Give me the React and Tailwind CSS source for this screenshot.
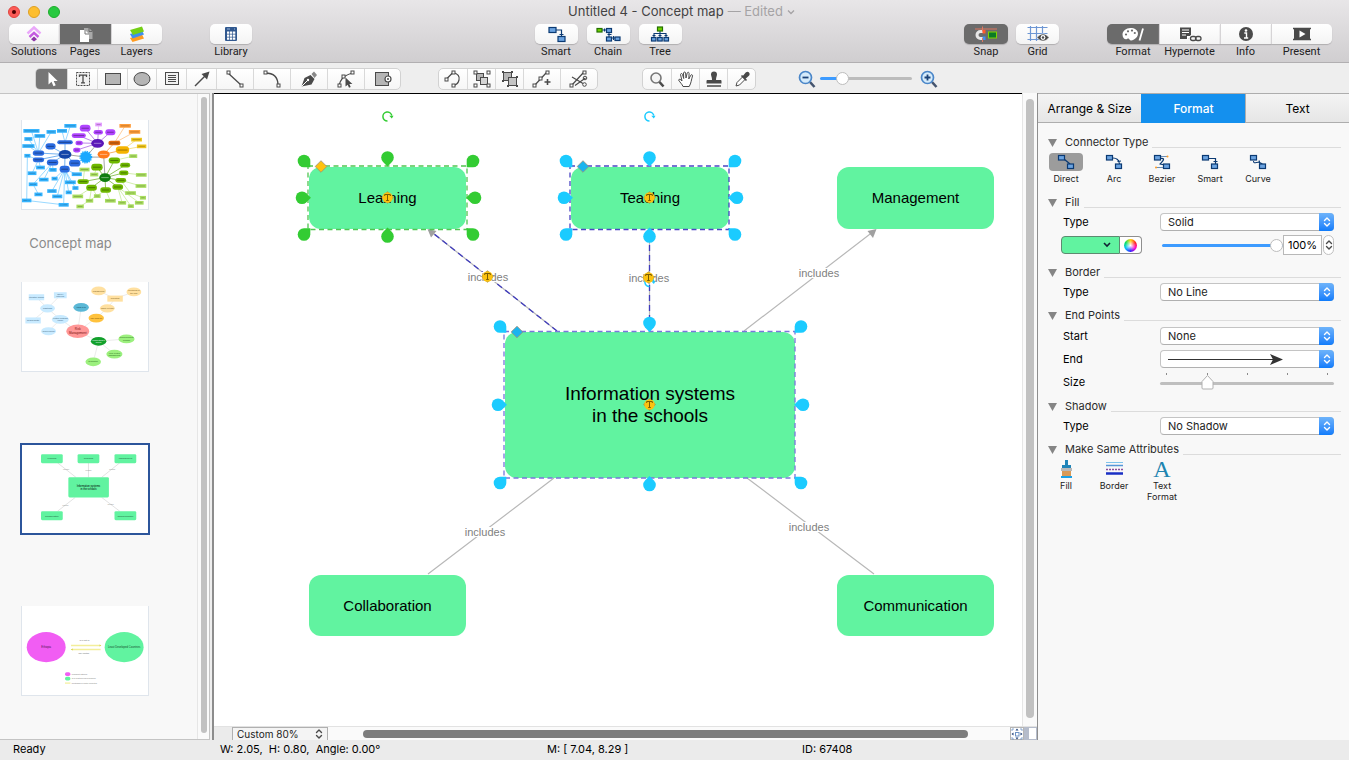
import { useState } from "react";
import { clsx } from "clsx";

const INK = "#4a4a4a";
const GREEN = "#61f3a0";
const NAVY = "#0b3a73";
const SKY = "#1bcbff";

/* ── Shared bits ── */

function Icon({ w = 24, h = 18, children, className }) {
  return (
    <svg width={w} height={h} viewBox={`0 0 ${w} ${h}`} fill="none" className={clsx("shrink-0", className)} aria-hidden="true">
      {children}
    </svg>
  );
}

function Dot({ x, y }) {
  return <rect x={x - 1.5} y={y - 1.5} width="3" height="3" fill="white" stroke={INK} strokeWidth="1" />;
}

function Box({ x, y, w = 7, h = 5, fill = "#6ba3e0", stroke = NAVY }) {
  return <rect x={x} y={y} width={w} height={h} fill={fill} stroke={stroke} strokeWidth="1.2" />;
}

function Chevrons({ color = INK, w = 8, h = 12 }) {
  return (
    <svg width={w} height={h} viewBox="0 0 8 12" fill="none" stroke={color} strokeWidth="1.4" strokeLinecap="round" strokeLinejoin="round" aria-hidden="true">
      <path d="M1.5 4.5L4 2l2.5 2.5M1.5 7.5L4 10l2.5-2.5" />
    </svg>
  );
}

/* ── Header icons ── */

const solutionsIcon = (
  <Icon>
    <g strokeWidth="2.4">
      <path d="M5.5 8.500L12 2.500l6.500 6" stroke="#eaa8fa" />
      <path d="M7.5 12L12 7.800l4.500 4.200" stroke="#c45be0" />
    </g>
    <path d="M12 11.500l3 2.700-3 2.300-3-2.300z" fill="#8d35a8" />
  </Icon>
);

const pagesIcon = (
  <Icon>
    <path d="M10 3h5l3.500 3.500V14H10z" fill="#a9a9a9" />
    <path d="M15 3v3.500h3.500" stroke="#6a6a6a" />
    <path d="M6 5h5l4 4v8H6z" fill="white" />
    <path d="M11 5v4h4" stroke="#777" />
  </Icon>
);

const layersIcon = (
  <Icon>
    <path d="M5 13l12-3.500 2 4L7.500 17z" fill="#ff9b21" />
    <path d="M5 9l12-3.500 2 4L7.500 13.500z" fill="#3f8ef0" />
    <path d="M5 5l12-3.500 2 5L8 10z" fill="#74cf16" />
  </Icon>
);

const libraryIcon = (
  <Icon>
    <rect x="6" y="2" width="12" height="14" rx="1" fill="#31588f" />
    <path d="M8 4h3M15 4h1" stroke="#9db8dc" />
    <path d="M8 6.500h2.300v2.300H8zM11 6.500h2.300v2.300H11zM14 6.500h2.300v2.300H14zM8 9.500h2.300v2.300H8zM11 9.500h2.300v2.300H11zM14 9.500h2.300v2.300H14zM8 12.500h2.300v2.300H8zM11 12.500h2.300v2.300H11zM14 12.500h2.300v2.300H14z" fill="white" />
  </Icon>
);

const smartIcon = (
  <Icon>
    <path d="M11 5h6.500v7M15.500 9.500h4" stroke={NAVY} strokeWidth="1.2" />
    <Box x="5" y="2.5" />
    <Box x="14" y="11.5" />
  </Icon>
);

const chainIcon = (
  <Icon w={26}>
    <path d="M6 5h8v8h9M9.500 3.500v3M12.500 9.500h4M18.500 11v4" stroke={NAVY} strokeWidth="1.1" />
    <Box x="2" y="3.5" w={5} h={3.5} fill="#6fd000" stroke="#247000" />
    <Box x="11.5" y="3.5" w={5} h={4} />
    <Box x="11.5" y="12" w={5} h={4} />
    <Box x="20" y="12" w={5} h={3.5} />
  </Icon>
);

const treeIcon = (
  <Icon>
    <path d="M12 4v9M6 12V8.500h12V12M4.500 10.500h3M10.500 10.500h3M16.500 10.500h3" stroke={NAVY} strokeWidth="1.1" />
    <Box x="9.5" y="2" w={5} h={4} fill="#6fd000" stroke="#247000" />
    <Box x="3.5" y="12.5" w={4.5} h={3.5} />
    <Box x="9.7" y="12.5" w={4.5} h={3.5} />
    <Box x="16" y="12.5" w={4.5} h={3.5} />
  </Icon>
);

const snapIcon = (
  <Icon>
    <path d="M1 4h22" stroke="#e0765f" />
    <path d="M9 6.500H6.500a3.500 3.500 0 000 7H9" stroke="#e6e6e6" strokeWidth="3" />
    <rect x="8.5" y="5" width="3" height="3.5" fill="#ff5a2c" />
    <rect x="8.5" y="11.5" width="3" height="3.5" fill="#3f8ef0" />
    <path d="M8.500 1.500v5M8.500 13v4" stroke="#e0765f" />
    <rect x="14.5" y="7" width="8" height="6" fill="#0b7a26" stroke="#7fd400" />
  </Icon>
);

const gridIcon = (
  <Icon>
    <path d="M1.500 2.500h20M1.500 8.500h20M1.500 14.500h12M4.500 1v15M10.500 1v15M16.500 1v8" stroke="#6e97d4" strokeWidth="1.2" />
    <path d="M11 12.500c3.500-4.700 8.500-4.700 12 0-3.500 4.700-8.500 4.700-12 0z" fill={INK} stroke="white" strokeWidth=".6" />
    <circle cx="17" cy="12.5" r="2.4" fill="white" />
    <circle cx="17" cy="12.5" r="1.2" fill={INK} />
  </Icon>
);

const paletteIcon = (
  <Icon>
    <path d="M9.500 3C5 3 1.500 6 1.500 9.500S4 15 6 14c1.200-.6 2-.6 2.500.5.600 1.300 2.300 1.200 4.500 0C15.500 13 17 11 17 8.500 17 5 13.500 3 9.500 3z" fill="white" />
    <circle cx="5" cy="9.5" r="1.1" fill="#6b6b6b" />
    <circle cx="7" cy="6.3" r="1.1" fill="#6b6b6b" />
    <circle cx="11" cy="5.6" r="1.1" fill="#6b6b6b" />
    <circle cx="13.8" cy="8" r="1.1" fill="#6b6b6b" />
    <path d="M22 3.500l-3.500 12" stroke="white" strokeWidth="1.8" />
  </Icon>
);

const hypernoteIcon = (
  <Icon>
    <path d="M2 2.500h11v7L10 14H2z" fill={INK} />
    <path d="M4 5h7M4 7.500h7M4 10h4" stroke="white" />
    <path d="M9 15v-4h4z" fill="white" />
    <rect x="12.5" y="11.5" width="5.5" height="4" rx="2" stroke={INK} strokeWidth="1.3" />
    <rect x="17.5" y="11.5" width="5.5" height="4" rx="2" stroke={INK} strokeWidth="1.3" />
  </Icon>
);

const infoIcon = (
  <Icon>
    <circle cx="12" cy="9" r="7" fill={INK} />
    <circle cx="12" cy="5.5" r="1.3" fill="white" />
    <path d="M10.300 8h2.200v5M10 13h4.200" stroke="white" strokeWidth="1.4" />
  </Icon>
);

const presentIcon = (
  <Icon>
    <path d="M3 3.500h18M3 14.500h18" stroke={INK} strokeWidth="1.4" />
    <rect x="4" y="3.5" width="16" height="11" fill={INK} />
    <path d="M9.500 5.500l6 3.500-6 3.500z" fill="white" />
  </Icon>
);

function HeaderGroup({ items }) {
  return (
    <div className="flex">
      {items.map((item, i) => (
        <button key={item.label} type="button" className={clsx("flex flex-col items-center", item.width)}>
          <span
            className={clsx(
              "flex h-5 w-full items-center justify-center border-[#d6d4d6] shadow-[0_1px_1px_#b0aeb0]",
              i === 0 ? "rounded-l-[5px]" : "border-l",
              i === items.length - 1 && "rounded-r-[5px]",
              item.active ? "bg-[#6b6b6b]" : "bg-gradient-to-b from-white to-[#f4f4f4]"
            )}
          >
            {item.icon}
          </span>
          <span className="font-[Roboto,sans-serif] text-[11px] leading-[15px] whitespace-nowrap text-[#222122]">{item.label}</span>
        </button>
      ))}
    </div>
  );
}

function Header() {
  return (
    <header className="border-b border-[#b1afb1] bg-gradient-to-b from-[#e8e6e8] to-[#d0ced0]">
      <div className="grid h-6 grid-cols-[1fr_auto_1fr] items-center pr-2 pl-2">
        <div className="flex gap-2">
          <button type="button" aria-label="Close" className="flex h-3 w-3 items-center justify-center rounded-full border border-[#e0443e] bg-[#fc5b57]">
            <span className="h-1 w-1 rounded-full bg-[#4d0000]" />
          </button>
          <button type="button" aria-label="Minimize" className="h-3 w-3 rounded-full border border-[#dfa023] bg-[#fdbe30]" />
          <button type="button" aria-label="Zoom window" className="h-3 w-3 rounded-full border border-[#1dad2b] bg-[#27c93f]" />
        </div>
        <h1 className="flex items-center justify-center gap-1 pl-[14px] text-[13px] whitespace-nowrap text-[#434243]">
          Untitled 4 - Concept map <span className="text-[#a5a3a5]">— Edited</span>
          <Icon w={8} h={6}>
            <path d="M1 1.500l3 3 3-3" stroke="#a5a3a5" strokeWidth="1.3" />
          </Icon>
        </h1>
        <span />
      </div>
      <div className="flex justify-between pr-[17px] pb-[3px] pl-[9px]">
        <div className="flex gap-12">
          <HeaderGroup
            items={[
              { label: "Solutions", icon: solutionsIcon, width: "w-[50px]" },
              { label: "Pages", icon: pagesIcon, width: "w-[52px]", active: true },
              { label: "Layers", icon: layersIcon, width: "w-[51px]" },
            ]}
          />
          <HeaderGroup items={[{ label: "Library", icon: libraryIcon, width: "w-[42px]" }]} />
        </div>
        <div className="flex gap-[9px]">
          <HeaderGroup items={[{ label: "Smart", icon: smartIcon, width: "w-[43px]" }]} />
          <HeaderGroup items={[{ label: "Chain", icon: chainIcon, width: "w-[43px]" }]} />
          <HeaderGroup items={[{ label: "Tree", icon: treeIcon, width: "w-[43px]" }]} />
        </div>
        <div className="flex gap-12">
          <div className="flex gap-2">
            <HeaderGroup items={[{ label: "Snap", icon: snapIcon, width: "w-11", active: true }]} />
            <HeaderGroup items={[{ label: "Grid", icon: gridIcon, width: "w-[43px]" }]} />
          </div>
          <HeaderGroup
            items={[
              { label: "Format", icon: paletteIcon, width: "w-[52px]", active: true },
              { label: "Hypernote", icon: hypernoteIcon, width: "w-[61px]" },
              { label: "Info", icon: infoIcon, width: "w-[51px]" },
              { label: "Present", icon: presentIcon, width: "w-[61px]" },
            ]}
          />
        </div>
      </div>
    </header>
  );
}

/* ── Drawing toolbar ── */

const drawTools = [
  {
    label: "Select",
    width: "w-[31px]",
    icon: <path d="M8.500 2v12.500l3-2.700 2 4.500 2.200-1-2-4.400h4z" fill="white" />,
  },
  {
    label: "Text block",
    width: "w-[30px]",
    icon: (
      <>
        <rect x="5.5" y="2.5" width="13" height="13" stroke={INK} strokeDasharray="2 1" fill="#f1f1f1" />
        <path d="M8.500 7V5.200h7V7M12 5.200v7.500M10 12.900h4" stroke={INK} strokeWidth="1.3" />
      </>
    ),
  },
  {
    label: "Rectangle",
    width: "w-[30px]",
    icon: <rect x="4.5" y="3.5" width="15" height="11" fill="#b5b5b5" stroke={INK} />,
  },
  {
    label: "Ellipse",
    width: "w-[29px]",
    icon: <ellipse cx="12" cy="9" rx="8" ry="6.5" fill="#b5b5b5" stroke={INK} />,
  },
  {
    label: "Note",
    width: "w-[30px]",
    icon: (
      <>
        <rect x="5.5" y="2.5" width="13" height="12" fill="#f1f1f1" stroke={INK} />
        <path d="M8 5.500h8M8 7.500h8M8 9.500h8M8 11.500h8" stroke={INK} />
      </>
    ),
  },
  {
    label: "Arrow",
    width: "w-[30px]",
    icon: (
      <>
        <path d="M5 16L15 6" stroke={INK} strokeWidth="1.4" />
        <path d="M19.500 1.500L17 9.500l-5.500-5.500z" fill={INK} />
      </>
    ),
  },
  {
    label: "Line",
    width: "w-[37px]",
    icon: (
      <>
        <path d="M5 3l13 12" stroke={INK} strokeWidth="1.3" />
        <Dot x={5.5} y={2.5} />
        <Dot x={18.5} y={15.5} />
      </>
    ),
  },
  {
    label: "Arc",
    width: "w-[37px]",
    icon: (
      <>
        <path d="M5 3c9 0 13 4 13 12" stroke={INK} strokeWidth="1.3" />
        <Dot x={5.5} y={2.5} />
        <Dot x={18.5} y={15.5} />
      </>
    ),
  },
  {
    label: "Pen",
    width: "w-[37px]",
    icon: (
      <>
        <path d="M4.500 16.500l3-8.500 6-3 4 4-3 5.500z" fill={INK} />
        <path d="M4.500 16.500l5.500-5.500" stroke="white" />
        <circle cx="11" cy="10" r="1.2" fill="white" />
        <path d="M14.500 4l2.500-2.500L20 5l-2.500 3z" fill="#888" />
      </>
    ),
  },
  {
    label: "Edit points",
    width: "w-[37px]",
    icon: (
      <>
        <path d="M5 15.500C6.500 10 8 6 18.500 3" stroke={INK} strokeWidth="1.3" />
        <Dot x={5.5} y={15.5} />
        <Dot x={9.5} y={6.5} />
        <Dot x={18.5} y={2.5} />
        <path d="M11.500 7.500v9l2.200-1.800 1.300 3 1.700-.7-1.300-3h3z" fill={INK} />
      </>
    ),
  },
  {
    label: "Connection point",
    width: "w-[36px]",
    icon: (
      <>
        <rect x="4.5" y="2.5" width="13" height="13" fill="#b5b5b5" stroke={INK} />
        <circle cx="17" cy="9" r="3" fill="white" stroke={INK} strokeWidth="1.2" />
        <circle cx="17" cy="9" r="1" fill={INK} />
      </>
    ),
  },
];

const editTools = [
  {
    label: "Round",
    width: "w-7",
    icon: (
      <>
        <path d="M5 9.500l7-7c5 1 7 4 6 7.500-.7 3-3 5-6 5.500" stroke={INK} strokeWidth="1.2" />
        <Dot x={5.5} y={9.5} />
        <Dot x={12.5} y={2.5} />
        <Dot x={12.5} y={15.5} />
      </>
    ),
  },
  {
    label: "Group",
    width: "w-7",
    icon: (
      <>
        <rect x="6.5" y="3.5" width="7" height="7" fill="#b5b5b5" stroke={INK} />
        <rect x="10.5" y="7.5" width="7" height="7" fill="#d4d4d4" stroke={INK} />
        <Dot x={5.5} y={2.5} />
        <Dot x={18.5} y={2.5} />
        <Dot x={5.5} y={15.5} />
        <Dot x={18.5} y={15.5} />
      </>
    ),
  },
  {
    label: "Ungroup",
    width: "w-7",
    icon: (
      <>
        <rect x="5.5" y="2.5" width="8" height="8" fill="#b5b5b5" stroke={INK} />
        <rect x="10.5" y="7.5" width="8" height="8" fill="#c4c4c4" stroke={INK} />
        <path d="M4 1h2v2H4zM13 1h2v2h-2zM4 10h2v2H4zM9 15h2v2H9zM18 15h2v2h-2zM18 6h2v2h-2z" fill={INK} />
      </>
    ),
  },
  {
    label: "Add point",
    width: "w-[37px]",
    icon: (
      <>
        <path d="M4.500 15.500l12-13" stroke={INK} strokeWidth="1.2" />
        <Dot x={4.5} y={15.5} />
        <Dot x={10.5} y={8.5} />
        <Dot x={17.5} y={2.5} />
        <path d="M17.500 9v6M14.500 12h6" stroke={INK} strokeWidth="1.6" />
      </>
    ),
  },
  {
    label: "Cut connector",
    width: "w-[37px]",
    icon: (
      <>
        <path d="M4.500 15.500l12-13M5 7l11 6.500M8 15.500L18.500 8" stroke={INK} strokeWidth="1.2" />
        <Dot x={4.5} y={15.5} />
        <Dot x={17.5} y={2.5} />
        <circle cx="18" cy="8" r="1.8" stroke={INK} />
        <circle cx="17.5" cy="14.5" r="1.8" stroke={INK} />
      </>
    ),
  },
];

const viewTools = [
  {
    label: "Magnifier",
    width: "w-7",
    icon: (
      <>
        <circle cx="11" cy="8" r="5" fill="#f4f4f4" stroke="#777" strokeWidth="1.6" />
        <path d="M14.500 12l4 4.500" stroke={INK} strokeWidth="2.6" />
      </>
    ),
  },
  {
    label: "Hand",
    width: "w-7",
    icon: (
      <path
        d="M9 16.500c-1-2.500-2.500-3.500-4.500-6.500.5-1.200 2-1 3.500 1L6.500 4.500c.3-1.300 1.700-1.200 2 0L9.700 8.500 9.500 3c.3-1.300 1.900-1.300 2.100 0L12 8l1.200-5c.5-1.200 2-.9 1.900.5L14.800 9l2-3.800c.8-1 2-.4 1.700.8-1.200 4-1.300 7-3.300 10.500z"
        fill="white"
        stroke={INK}
        strokeWidth="1"
      />
    ),
  },
  {
    label: "Stamp",
    width: "w-7",
    icon: (
      <>
        <path d="M12 1.500a3 3 0 013 3c0 1.500-1 2.500-1 5.500h4.500c.6 0 1 .5 1 1v2.500h-15V11c0-.5.400-1 1-1H10c0-3-1-4-1-5.500a3 3 0 013-3z" fill={INK} />
        <path d="M5 16h14" stroke={INK} strokeWidth="1.5" />
      </>
    ),
  },
  {
    label: "Eyedropper",
    width: "w-7",
    icon: (
      <>
        <path d="M6 16l1-3.500 6-6 2.500 2.500-6 6z" fill="white" stroke={INK} />
        <path d="M11.500 5.500l5 5M13 7l3.500-4c1.500-1 3 .5 2 2l-4 3.500z" stroke={INK} strokeWidth="1.7" fill={INK} />
      </>
    ),
  },
];

function ToolStrip({ tools, active }) {
  return (
    <div className="flex h-[22px] overflow-hidden rounded-[5px] border border-[#d2d2d2] bg-gradient-to-b from-white to-[#f6f6f6]">
      {tools.map((tool, i) => (
        <button
          key={tool.label}
          type="button"
          aria-label={tool.label}
          className={clsx(
            "flex items-center justify-center border-[#d9d9d9]",
            tool.width,
            i > 0 && "border-l",
            tool.label === active && "bg-[#767676]"
          )}
        >
          <Icon>{tool.icon}</Icon>
        </button>
      ))}
    </div>
  );
}

function ZoomGlass({ plus }) {
  return (
    <Icon w={18}>
      <path d="M12 12l4.500 5" stroke="#44546e" strokeWidth="2.6" />
      <circle cx="7.5" cy="7.5" r="6" fill="#d5ebfb" stroke="#4a86c8" strokeWidth="1.7" />
      <path d={plus ? "M4.500 7.500h6M7.500 4.500v6" : "M4.500 7.500h6"} stroke="#1c4378" strokeWidth="1.8" />
    </Icon>
  );
}

const ROUND_THUMB =
  "appearance-none bg-transparent [&::-webkit-slider-runnable-track]:h-[3px] [&::-webkit-slider-runnable-track]:rounded-full [&::-webkit-slider-thumb]:-mt-[5px] [&::-webkit-slider-thumb]:h-[13px] [&::-webkit-slider-thumb]:w-[13px] [&::-webkit-slider-thumb]:appearance-none [&::-webkit-slider-thumb]:rounded-full [&::-webkit-slider-thumb]:border [&::-webkit-slider-thumb]:border-[#bdbdbd] [&::-webkit-slider-thumb]:bg-white";

function Toolbar() {
  return (
    <div className="flex h-[30px] items-center bg-[#eeeeee] pt-px pl-[35px]">
      <ToolStrip tools={drawTools} active="Select" />
      <div className="w-[37px]" />
      <ToolStrip tools={editTools} />
      <div className="w-11" />
      <ToolStrip tools={viewTools} />
      <div className="flex items-center gap-1 pl-[42px]">
        <button type="button" aria-label="Zoom out">
          <ZoomGlass />
        </button>
        <input
          type="range"
          aria-label="Zoom"
          defaultValue="20"
          className={clsx(
            "mr-1 h-[13px] w-[92px] [&::-webkit-slider-runnable-track]:bg-[linear-gradient(90deg,#3d9bff_20%,#bcbcbc_20%)]",
            ROUND_THUMB
          )}
        />
        <button type="button" aria-label="Zoom in">
          <ZoomGlass plus />
        </button>
      </div>
    </div>
  );
}

/* ── Page thumbnails ── */

const hub = (x, y, rx, ry, fill) => ({ x, y, rx, ry, fill });

const mindBranches = [
  {
    line: "#2f8ce8",
    center: hub(196, 177, 19, 13, "#1546a8"),
    nodes: [
      hub(196, 141, 23, 6, "#2b6be0"), hub(153, 153, 15, 9, "#2b6be0"), hub(117, 173, 17, 8, "#2b6be0"),
      hub(117, 193, 17, 7, "#2b6be0"), hub(159, 201, 17, 9, "#2b6be0"), hub(195, 221, 15, 10, "#2b6be0"),
      hub(225, 203, 17, 10, "#2b6be0"),
    ],
  },
  {
    line: "#9b4be0",
    center: hub(293, 144, 19, 13, "#5a16b8"),
    nodes: [
      hub(256, 99, 16, 10, "#b044ff"), hub(295, 111, 14, 7, "#b044ff"), hub(331, 111, 15, 9, "#b044ff"),
      hub(237, 121, 21, 7, "#b044ff"), hub(238, 143, 11, 7, "#b044ff"), hub(231, 164, 11, 7, "#b044ff"),
    ],
  },
  {
    line: "#ee8a20",
    center: hub(311, 177, 18, 12, "#ff7a1c"),
    nodes: [hub(343, 143, 18, 7, "#e06a10"), hub(367, 164, 20, 11, "#f5b400")],
  },
  {
    line: "#5ea80e",
    center: hub(315, 246, 17, 13, "#0f7d0f"),
    nodes: [
      hub(291, 215, 17, 10, "#6fb800"), hub(250, 258, 17, 7, "#6fb800"), hub(275, 276, 16, 9, "#6fb800"),
      hub(317, 283, 16, 8, "#6fb800"), hub(353, 274, 16, 8, "#6fb800"), hub(362, 254, 16, 7, "#6fb800"),
      hub(371, 232, 14, 7, "#6fb800"), hub(375, 209, 15, 7, "#6fb800"), hub(343, 195, 17, 9, "#6fb800"),
    ],
  },
];

// [x, y, width, parentX, parentY]
const mindLeaves = [
  {
    fill: "#35b4ff",
    items: [
      [96, 107, 48, 117, 173], [155, 110, 28, 117, 173], [187, 107, 30, 196, 141], [212, 92, 36, 196, 141],
      [87, 131, 24, 117, 173], [121, 122, 32, 117, 173], [87, 152, 36, 117, 173], [84, 181, 18, 117, 193],
      [123, 216, 26, 117, 193], [98, 233, 26, 117, 193], [133, 252, 28, 159, 201], [160, 223, 22, 159, 201],
      [101, 266, 26, 159, 201], [165, 249, 18, 195, 221], [117, 296, 24, 101, 266], [157, 286, 28, 195, 221],
      [173, 302, 30, 195, 221], [192, 327, 30, 195, 221], [207, 290, 18, 195, 221], [212, 260, 32, 195, 221],
      [231, 236, 30, 195, 221], [227, 277, 18, 195, 221], [82, 314, 28, 84, 181],
    ],
  },
  { fill: "#e39bff", items: [[296, 88, 20, 295, 111]] },
  { fill: "#ff9d3a", items: [[375, 92, 34, 343, 143], [403, 110, 34, 343, 143]] },
  { fill: "#edc41d", items: [[409, 133, 32, 367, 164], [424, 153, 28, 367, 164]] },
  {
    fill: "#a8dd5e",
    items: [
      [254, 222, 30, 250, 258], [283, 237, 24, 291, 215], [234, 302, 32, 275, 276], [241, 332, 22, 317, 283],
      [269, 315, 22, 275, 276], [292, 301, 20, 275, 276], [331, 315, 32, 317, 283], [366, 321, 24, 353, 274],
      [392, 331, 18, 353, 274], [391, 292, 32, 362, 254], [428, 306, 18, 391, 292], [417, 321, 26, 353, 274],
      [422, 271, 32, 362, 254], [423, 238, 32, 371, 232], [399, 182, 24, 343, 195],
    ],
  },
];

function MindMapThumb() {
  return (
    <svg viewBox="65 75 381 267" className="h-full w-full" aria-hidden="true">
      {mindLeaves.map((group) =>
        group.items.map(([x, y, w, px, py]) => (
          <g key={`${x}-${y}`}>
            <path d={`M${x} ${y}L${px} ${py}`} stroke={group.fill} strokeWidth="1.5" />
            <rect x={x - w / 2} y={y - 5.5} width={w} height="11" fill={group.fill} />
            <path d={`M${x - w / 2 + 4} ${y}h${w - 8}`} stroke="#000" strokeOpacity=".25" strokeWidth="2.5" />
          </g>
        ))
      )}
      <path d="M82 314L192 327" stroke="#35b4ff" strokeWidth="1.5" />
      <path d="M258 185L196 177M258 185L293 144M258 185H311M311 177L315 246" stroke="#777" strokeWidth="2" />
      {mindBranches.map((b) => (
        <g key={b.line}>
          {b.nodes.map((n) => (
            <g key={`${n.x}-${n.y}`}>
              <path d={`M${b.center.x} ${b.center.y}L${n.x} ${n.y}`} stroke={b.line} strokeWidth="2" />
              <rect x={n.x - n.rx} y={n.y - n.ry} width={n.rx * 2} height={n.ry * 2} rx={n.ry} fill={n.fill} />
              <path d={`M${n.x - n.rx + 5} ${n.y}h${n.rx * 2 - 10}`} stroke="#000" strokeOpacity=".35" strokeWidth="3" />
            </g>
          ))}
          <ellipse cx={b.center.x} cy={b.center.y} rx={b.center.rx} ry={b.center.ry} fill={b.center.fill} />
          <path d={`M${b.center.x - 11} ${b.center.y}h22`} stroke="#fff" strokeOpacity=".4" strokeWidth="3" />
        </g>
      ))}
      <circle cx="258" cy="185" r="16" fill="#1aa8ff" />
      <circle cx="258" cy="185" r="17" stroke="#1aa8ff" strokeWidth="4" strokeDasharray="4 2.700" fill="none" />
    </svg>
  );
}

const riskLinks = [
  [234, 707, 244, 636], [234, 707, 289, 668], [234, 707, 182, 672], [234, 707, 296, 737], [289, 668, 322, 639],
  [322, 639, 345, 610], [345, 610, 296, 587], [345, 610, 401, 590], [182, 672, 144, 639], [182, 672, 147, 707],
  [144, 639, 111, 606], [144, 639, 182, 600], [144, 639, 101, 675], [296, 737, 379, 730], [296, 737, 343, 775],
  [296, 737, 280, 798],
];

const riskNodes = [
  { x: 234, y: 707, rx: 34, ry: 20, fill: "#ff9797", lines: ["Risk", "Management"], color: "#7a1010", size: 9 },
  { x: 244, y: 636, rx: 23, ry: 13, fill: "#5bb8d6", lines: ["What is it?"], color: "#0c4156" },
  { x: 289, y: 668, rx: 23, ry: 13, fill: "#ffc23d", lines: ["Why does it?"], color: "#6b4700" },
  { x: 182, y: 672, rx: 25, ry: 13, fill: "#c8eaff", lines: ["Further methods", "used?"], color: "#3b617a" },
  { x: 147, y: 707, rx: 22, ry: 12, fill: "#c8eaff", lines: ["Group project"], color: "#3b617a" },
  { x: 144, y: 639, rx: 22, ry: 12, fill: "#c8eaff", lines: ["Traditional"], color: "#3b617a" },
  { x: 322, y: 639, rx: 22, ry: 12, fill: "#ffe0a0", lines: ["Safety of team"], color: "#7a5a1a" },
  { x: 296, y: 587, rx: 22, ry: 13, fill: "#ffe0a0", lines: ["Management"], color: "#7a5a1a" },
  { x: 401, y: 590, rx: 22, ry: 13, fill: "#ffe0a0", lines: ["Monitoring of", "the plan"], color: "#7a5a1a" },
  { x: 296, y: 737, rx: 23, ry: 13, fill: "#12a02c", lines: ["Which steps it", "does?"], color: "#ffffff" },
  { x: 379, y: 730, rx: 24, ry: 13, fill: "#9cf07e", lines: ["Communicating", "findings"], color: "#2b6b1a" },
  { x: 343, y: 775, rx: 24, ry: 13, fill: "#9cf07e", lines: ["Work related", "assessments"], color: "#2b6b1a" },
  { x: 280, y: 798, rx: 23, ry: 13, fill: "#9cf07e", lines: ["Evaluation"], color: "#2b6b1a" },
  { x: 345, y: 610, rx: 23, ry: 9, fill: "#ffe0a0", lines: ["Reporting"], color: "#7a5a1a", box: true },
  { x: 111, y: 606, rx: 23, ry: 9, fill: "#c8eaff", lines: ["Literature search"], color: "#3b617a", box: true },
  { x: 182, y: 600, rx: 19, ry: 9, fill: "#c8eaff", lines: ["Survey", "interview"], color: "#3b617a", box: true },
  { x: 101, y: 675, rx: 23, ry: 9, fill: "#c8eaff", lines: ["Search what?"], color: "#3b617a", box: true },
];

function RiskThumb() {
  return (
    <svg viewBox="65 561 381 267" className="h-full w-full font-[Liberation_Sans,sans-serif]" aria-hidden="true">
      {riskLinks.map((l) => (
        <path key={l.join()} d={`M${l[0]} ${l[1]}L${l[2]} ${l[3]}`} stroke="#d8d8d8" strokeWidth="1.5" />
      ))}
      {riskNodes.map((n) => (
        <g key={`${n.x}-${n.y}`}>
          {n.box ? (
            <rect x={n.x - n.rx} y={n.y - n.ry} width={n.rx * 2} height={n.ry * 2} fill={n.fill} />
          ) : (
            <ellipse cx={n.x} cy={n.y} rx={n.rx} ry={n.ry} fill={n.fill} />
          )}
          {n.lines.map((t, i) => (
            <text key={t} x={n.x} y={n.y + 2 + (i - (n.lines.length - 1) / 2) * (n.size || 6) * 1.1} fontSize={n.size || 6} textAnchor="middle" fill={n.color}>
              {t}
            </text>
          ))}
        </g>
      ))}
    </svg>
  );
}

function SchoolsThumb() {
  const boxes = [
    [155, 86, "Learning"], [266, 86, "Teaching"], [378, 86, "Management"], [155, 259, "Collaboration"], [378, 259, "Communication"],
  ];
  return (
    <svg viewBox="65 45 381 267" className="h-full w-full font-[Liberation_Sans,sans-serif]" aria-hidden="true">
      <path d="M172 99L228 143M266 99v44M361 99L306 143M172 246L226 204M361 246L306 204" stroke="#c4c4c4" strokeWidth="1.5" />
      {boxes.map(([x, y, t]) => (
        <g key={t}>
          <rect x={x - 33} y={y - 13} width="66" height="27" rx="4" fill={GREEN} />
          <text x={x} y={y + 3} fontSize="7" textAnchor="middle" fill="#1d5a38">{t}</text>
        </g>
      ))}
      <rect x="205" y="143" width="123" height="61" rx="4" fill={GREEN} />
      <text x="266" y="172" fontSize="8" textAnchor="middle">Information systems</text>
      <text x="266" y="181" fontSize="8" textAnchor="middle">in the schools</text>
      {[[198, 122], [266, 123], [338, 121], [196, 230], [333, 228]].map(([x, y]) => (
        <text key={x} x={x} y={y} fontSize="5" textAnchor="middle" fill="#888">includes</text>
      ))}
    </svg>
  );
}

function CountriesThumb() {
  return (
    <svg viewBox="65 528 381 267" className="h-full w-full font-[Liberation_Sans,sans-serif]" aria-hidden="true">
      <ellipse cx="140" cy="650" rx="58" ry="45" fill="#f15df3" />
      <ellipse cx="372" cy="650" rx="58" ry="45" fill={GREEN} />
      <text x="140" y="652" fontSize="8" textAnchor="middle" fill="#4a1550">Ethiopia</text>
      <text x="372" y="653" fontSize="8" textAnchor="middle" fill="#174a2c">Least Developed Countries</text>
      <path d="M214 645h86M218 657h84" stroke="#f3ee9a" strokeWidth="4" />
      <path d="M299 642l5 3-5 3zM219 654l-6 3 6 3z" fill="#d6cf3a" />
      <text x="254" y="633" fontSize="6" textAnchor="middle" fill="#666">is in part of</text>
      <text x="252" y="671" fontSize="6" textAnchor="middle" fill="#666">may contain</text>
      <rect x="196" y="725" width="16" height="11" rx="5" fill="#f15df3" />
      <rect x="196" y="738" width="16" height="11" rx="5" fill={GREEN} />
      <path d="M196 757h16" stroke="#f0e76e" strokeWidth="2.5" />
      <g fontSize="5" fill="#777">
        <text x="216" y="732">belonging to Ethiopia</text>
        <text x="216" y="745">all of Least Developed Countries</text>
        <text x="216" y="759">Relationship of country connection</text>
      </g>
    </svg>
  );
}

const pages = [
  { name: "Page 1", caption: "Concept map", thumb: <MindMapThumb /> },
  { name: "Page 2", thumb: <RiskThumb /> },
  { name: "Page 3", thumb: <SchoolsThumb /> },
  { name: "Page 4", thumb: <CountriesThumb /> },
];

function PagesSidebar() {
  const [selected, setSelected] = useState(2);

  return (
    <aside className="flex w-[210px] shrink-0 border-t border-r border-b border-[#c4c4c4] bg-[#f8f8f8]">
      <div className="flex-1 overflow-hidden pt-[25px] pl-5">
        {pages.map((page, i) => (
          <div key={page.name} className="h-[162px]">
            <button
              type="button"
              aria-label={page.name}
              onClick={() => setSelected(i)}
              className={clsx(
                "block h-[92px] w-[130px] bg-white",
                selected === i ? "border-2 border-[#2c559b]" : "border border-[#f8f8f8] shadow-[inset_-1px_-1px_0_#dfe5ec,inset_1px_0_0_#dfe5ec]"
              )}
            >
              {page.thumb}
            </button>
            {page.caption && (
              <p className="w-[101px] pt-[22px] text-center text-[13px] leading-5 text-[#8a8a8a]">{page.caption}</p>
            )}
          </div>
        ))}
      </div>
      <div className="flex w-3 justify-center border-l border-[#e6e6e6] bg-[#fafafa] pt-[3px] pb-[6px]">
        <div className="w-[6px] rounded-full bg-[#c1c1c1]" />
      </div>
    </aside>
  );
}

/* ── Canvas ── */

const nodes = [
  { label: "Learning", place: "left-[95px] top-[73px] h-[62px] w-[157px]" },
  { label: "Teaching", place: "left-[357px] top-[73px] h-[62px] w-[158px]" },
  { label: "Management", place: "left-[623px] top-[73px] h-[62px] w-[157px]" },
  { label: "Information systems\nin the schools", place: "left-[291px] top-[238px] h-[146px] w-[290px]", large: true },
  { label: "Collaboration", place: "left-[95px] top-[481px] h-[61px] w-[157px]" },
  { label: "Communication", place: "left-[623px] top-[481px] h-[61px] w-[157px]" },
];

const edgeLabels = [
  { id: "learning", x: 274, y: 187 },
  { id: "teaching", x: 435, y: 188 },
  { id: "management", x: 605, y: 183 },
  { id: "collaboration", x: 271, y: 442 },
  { id: "communication", x: 595, y: 437 },
];

function Handle({ x, y, turn, color }) {
  return <path d="M6.300 0A6.300 6.300 0 1 0 0 6.300H6.300Z" fill={color} transform={`translate(${x} ${y}) rotate(${turn})`} />;
}

function Selection({ x1, y1, x2, y2, color, dash, knob }) {
  const cx = (x1 + x2) / 2;
  const cy = (y1 + y2) / 2;
  return (
    <g>
      <rect x={x1} y={y1} width={x2 - x1} height={y2 - y1} stroke={dash} strokeWidth="1.3" strokeDasharray="5 3.500" fill="none" />
      <Handle x={x1 - 4} y={y1 - 5} turn={0} color={color} />
      <Handle x={cx} y={y1 - 8.5} turn={45} color={color} />
      <Handle x={x2 + 6} y={y1 - 5} turn={90} color={color} />
      <Handle x={x2 + 8} y={cy} turn={135} color={color} />
      <Handle x={x2 + 6} y={y2 + 5} turn={180} color={color} />
      <Handle x={cx} y={y2 + 7} turn={225} color={color} />
      <Handle x={x1 - 4} y={y2 + 5} turn={270} color={color} />
      <Handle x={x1 - 6} y={cy} turn={315} color={color} />
      <path d="M0-5.800L5.800 0 0 5.800-5.800 0z" transform={`translate(${x1 + 13} ${y1 + 0.5})`} fill={knob} stroke="#9a8f78" strokeWidth=".8" />
    </g>
  );
}

function TextBadge({ x, y }) {
  return (
    <g transform={`translate(${x} ${y})`}>
      <path d="M0-6.300L6.300 0 0 6.300-6.300 0z" fill="#a08c50" />
      <circle r="5.2" fill="#fcc210" />
      <path d="M-2.800-1.500v-1.500h5.600v1.500M0-3v6M-1.300 3h2.600" stroke="#7a5c00" strokeWidth="1" fill="none" />
    </g>
  );
}

function RotateMark({ x, y, color }) {
  return (
    <g transform={`translate(${x} ${y})`}>
      <path d="M0 4.500A4.500 4.500 0 1 1 4.300-1" stroke={color} strokeWidth="1.5" fill="none" />
      <path d="M1.800-.8h4.200L4.300 2z" fill={color} />
    </g>
  );
}

function Canvas() {
  return (
    <div className="relative min-h-0 flex-1 overflow-hidden bg-white font-[Liberation_Sans,Arial,sans-serif]">
      {/* connectors */}
      <svg className="absolute inset-0 h-full w-full" fill="none" aria-hidden="true">
        <g stroke="#b8b8b8" strokeWidth="1.2">
          <path d="M343 237L215 136M435.500 237V136M530 237L660 137M340 384L214 480M533 384L660 480" />
        </g>
        <path d="M343 237L215 136M435.500 237V136" stroke="#3f3bbd" strokeWidth="1.3" strokeDasharray="6 4" />
        <path d="M213.500 135l9 2-5.500 6.500z" fill="#a0a0a0" />
        <path d="M662.500 135l-9 2 5.500 7z" fill="#a0a0a0" />
      </svg>

      {nodes.map((node) => (
        <div
          key={node.label}
          className={clsx(
            "absolute flex items-center justify-center rounded-xl bg-[#61f3a0] text-center whitespace-pre text-black",
            node.large ? "text-[19px] leading-[22px]" : "text-[15px] leading-5",
            node.place
          )}
        >
          {node.label}
        </div>
      ))}

      <svg className="absolute inset-0 h-full w-full" aria-hidden="true">
        {edgeLabels.map((l) => (
          <g key={l.id}>
            <rect x={l.x - 20} y={l.y - 9} width="40" height="10" fill="white" />
            <text x={l.x} y={l.y} fontSize="11" textAnchor="middle" fill="#808080">includes</text>
          </g>
        ))}
        <Selection x1={94} y1={72} x2={253} y2={135.5} color="#33cc33" dash="#52c552" knob="#ffc20e" />
        <Selection x1={356} y1={72} x2={515} y2={135.5} color={SKY} dash="#4b46c4" knob="#1bb4ee" />
        <Selection x1={290} y1={237.5} x2={581} y2={384} color={SKY} dash="#7b76dc" knob="#1bb4ee" />
        <RotateMark x={173.5} y={22.5} color="#33cc33" />
        <RotateMark x={435.5} y={22.5} color={SKY} />
        <RotateMark x={435.5} y={188} color={SKY} />
        <TextBadge x={173.5} y={103.5} />
        <TextBadge x={435.5} y={103.5} />
        <TextBadge x={273.5} y={182.5} />
        <TextBadge x={434.5} y={183.5} />
        <TextBadge x={435.5} y={310.5} />
      </svg>
    </div>
  );
}

function CanvasFooter() {
  return (
    <div className="flex h-[14px] shrink-0 border-t border-[#e2e2e2] bg-[#fafafa]">
      <div className="w-[18px] bg-[#ebebeb]" />
      <div className="relative w-24 border-t border-r border-l border-[#b0b0b0] bg-[#f4f4f4]">
        <select aria-label="Zoom level" className="block h-3 w-full appearance-none pl-1 text-[10px] leading-3 text-[#222]">
          <option>Custom 80%</option>
        </select>
        <span className="pointer-events-none absolute top-0 right-1">
          <Chevrons />
        </span>
      </div>
      <div className="flex flex-1 items-center pr-[42px] pl-[35px]">
        <div className="h-2 w-full rounded-full bg-[#7d7d7d]" />
      </div>
      <button type="button" aria-label="Fit page" className="flex w-[14px] items-center justify-center border border-[#b5b5b5] bg-white">
        <Icon w={12} h={12}>
          <rect x="4.5" y="4.5" width="3.5" height="3.5" stroke="#6d93c4" />
          <path d="M6 .5l1.500 2h-3zM6 11.500l1.500-2h-3zM.5 6l2-1.500v3zM11.500 6l-2-1.500v3z" fill="#1e3f78" />
          <path d="M1 3V1h2M9 1h2v2M1 9v2h2M9 11h2V9" stroke="#6d93c4" strokeWidth=".8" />
        </Icon>
      </button>
      <button type="button" aria-label="Split view" className="w-[13px] border border-l-[5px] border-[#b5bccb] bg-white" />
    </div>
  );
}

/* ── Inspector ── */

function Section({ title, children }) {
  return (
    <section>
      <h2 className="flex h-4 items-center gap-2 pl-[10px] text-[11px] leading-4 text-[#2b2b2b]">
        <Icon w={9} h={8} className="mt-[3px]">
          <path d="M0 0h9L4.500 8z" fill="#858585" />
        </Icon>
        <span className="pt-px">{title}</span>
        <span className="mt-[13px] mr-2 -ml-1 h-px flex-1 bg-[#dcdcdc]" />
      </h2>
      {children}
    </section>
  );
}

function Field({ label, id, children }) {
  return (
    <div className="flex h-[18px] items-center pr-[15px] pl-[25px]">
      <label htmlFor={id} className="w-[97px] text-[11px] text-black">
        {label}
      </label>
      <div className="relative flex-1">{children}</div>
    </div>
  );
}

function Dropdown({ id, options, children }) {
  return (
    <>
      <select
        id={id}
        className="block h-[18px] w-full appearance-none rounded-[4px] border border-[#c4c4c4] border-b-[#b0b0b0] bg-white pl-[7px] text-[11px] text-[#222]"
      >
        {options.map((o) => (
          <option key={o}>{o}</option>
        ))}
      </select>
      {children}
      <span className="pointer-events-none absolute inset-y-0 right-0 flex w-[15px] items-center justify-center rounded-r-[4px] bg-gradient-to-b from-[#6db3fa] to-[#0d7cfb]">
        <Chevrons color="white" />
      </span>
    </>
  );
}

const connectorTypes = [
  { label: "Direct", path: <path d="M10 6l6 5" stroke={NAVY} strokeWidth="1.3" /> },
  { label: "Arc", path: <path d="M11 5c4 0 6 2 6.500 6M15.500 8.500l3.500-.5" stroke={NAVY} strokeWidth="1.1" /> },
  {
    label: "Bezier",
    path: (
      <>
        <path d="M10 5.500c8-1 0 5 0 5.500l5 1" stroke={NAVY} strokeWidth="1.2" />
        <path d="M11 3.500h6M6 14.500h8" stroke="#6b8fb8" />
        <circle cx="17.5" cy="3.5" r="1" fill="#ff9b21" />
        <circle cx="6" cy="14.5" r="1" fill="#ff9b21" />
      </>
    ),
  },
  { label: "Smart", path: <path d="M11 5.500h6.500V11M15.500 8.500h4" stroke={NAVY} strokeWidth="1.2" /> },
  { label: "Curve", path: <path d="M7.500 8c0 4 4 0 6 1.500 2 1 3 1 3 2.500M13 7.500l1 3.500" stroke={NAVY} strokeWidth="1.1" /> },
];

function ConnectorPicker() {
  const [type, setType] = useState("Direct");

  return (
    <div className="flex h-11 gap-[14px] pt-1 pl-[11px]">
      {connectorTypes.map((c) => (
        <button key={c.label} type="button" onClick={() => setType(c.label)} className="flex w-[34px] flex-col items-center">
          <span className={clsx("flex h-[18px] w-full items-center justify-center rounded-[4px]", type === c.label && "bg-[#9c9c9c]")}>
            <Icon>
              {c.path}
              <Box x="4.5" y="2.5" w={6} h={4.5} />
              <Box x="13.5" y="11" w={6} h={4.5} />
            </Icon>
          </span>
          <span className="text-[9px] leading-4 text-[#222]">{c.label}</span>
        </button>
      ))}
    </div>
  );
}

const attributeButtons = [
  {
    label: "Fill",
    icon: (
      <>
        <path d="M11 0h3v5h3v3H8V5h3z" fill="#2084b8" />
        <path d="M7 8h11v3H7z" fill="#b9b9b9" />
        <path d="M8 11h9v6H8z" fill="#d99a57" />
        <path d="M7 16h11v2H7z" fill="#1aa0e6" />
      </>
    ),
  },
  {
    label: "Border",
    icon: (
      <>
        <path d="M4 2.500h17" stroke="#7fc4ec" />
        <path d="M4 5.500h17" stroke="#5596d8" strokeWidth="1.5" />
        <path d="M4 9.500h17" stroke="#8a4d9e" strokeDasharray="2 1" strokeWidth="1.5" />
        <path d="M4 13.500h17" stroke="#1a2fc4" strokeWidth="2.5" />
      </>
    ),
  },
  { label: "Text Format", glyph: true },
];

function FormatPanel() {
  const tabs = ["Arrange & Size", "Format", "Text"];
  const [tab, setTab] = useState("Format");

  return (
    <aside className="w-[312px] shrink-0 border-l border-[#8e8e8e] bg-[#f8f8f8]">
      <div role="tablist" className="flex h-[30px] border-t border-[#adadad]">
        {tabs.map((t, i) => (
          <button
            key={t}
            type="button"
            role="tab"
            aria-selected={tab === t}
            onClick={() => setTab(t)}
            className={clsx(
              "flex-1 text-[12px] whitespace-nowrap",
              i > 0 && "border-l",
              tab === t
                ? "border-[#1490ee] bg-[#1490ee] font-medium text-white"
                : "border-b border-[#adadad] bg-gradient-to-b from-[#f4f4f4] to-[#e6e6e6] pt-px text-black"
            )}
          >
            {t}
          </button>
        ))}
      </div>

      <div className="pt-[10px]">
        <Section title="Connector Type">
          <ConnectorPicker />
        </Section>

        <Section title="Fill">
          <div className="h-[54px] pt-1">
            <Field label="Type" id="fill-type">
              <Dropdown id="fill-type" options={["Solid"]} />
            </Field>
            <div className="mt-1 flex items-center pr-[15px] pl-[23px]">
              <button type="button" aria-label="Fill color" className="flex h-[18px] w-[59px] items-center justify-end rounded-l-[4px] border border-[#5d8a70] bg-[#61f3a0] pr-2">
                <Icon w={8} h={6}>
                  <path d="M1 1l3 3 3-3" stroke="#112233" strokeWidth="1.6" />
                </Icon>
              </button>
              <button type="button" aria-label="Color wheel" className="flex h-[18px] w-[22px] items-center justify-center rounded-r-[4px] border border-l-0 border-[#8f8f8f] bg-white">
                <span className="h-[13px] w-[13px] rounded-full bg-[radial-gradient(#fff,#fff0_60%),conic-gradient(#ffd000,#ff2020,#ff00d0,#3020ff,#00c0ff,#00e060,#ffd000)]" />
              </button>
              <input
                type="range"
                aria-label="Opacity"
                defaultValue="100"
                className={clsx("ml-5 h-[13px] min-w-0 flex-1 [&::-webkit-slider-runnable-track]:bg-[#3d9bff]", ROUND_THUMB)}
              />
              <input aria-label="Opacity value" defaultValue="100%" className="h-5 w-[39px] border border-[#b8b8b8] bg-white text-center text-[11px] text-black" />
              <button type="button" aria-label="Step opacity" className="ml-px flex h-5 w-[11px] items-center justify-center rounded-full border border-[#c0c0c0] bg-white">
                <Chevrons h={14} />
              </button>
            </div>
          </div>
        </Section>

        <Section title="Border">
          <div className="h-[27px] pt-1">
            <Field label="Type" id="border-type">
              <Dropdown id="border-type" options={["No Line"]} />
            </Field>
          </div>
        </Section>

        <Section title="End Points">
          <div className="flex h-[75px] flex-col gap-[5px] pt-[5px]">
            <Field label="Start" id="start-point">
              <Dropdown id="start-point" options={["None"]} />
            </Field>
            <Field label="End" id="end-point">
              <Dropdown id="end-point" options={[" "]}>
                <svg className="pointer-events-none absolute top-1 left-2" width="116" height="11" fill="none" aria-hidden="true">
                  <path d="M0 5.500h106" stroke="#333" />
                  <path d="M102 0l13 5.500-13 5.500 3-5.500z" fill="#333" />
                </svg>
              </Dropdown>
            </Field>
            <Field label="Size" id="end-size">
              <input
                id="end-size"
                type="range"
                defaultValue="24"
                className={clsx("block h-[18px] w-full pt-[3px] [&::-webkit-slider-runnable-track]:bg-[#bfbfbf]", ROUND_THUMB, "[&::-webkit-slider-thumb]:opacity-0")}
              />
              <svg className="pointer-events-none absolute inset-0" width="173" height="18" fill="none" aria-hidden="true">
                <path d="M6.500 0v2M47.500 0v2M87.500 0v2M127.500 0v2M167.500 0v2" stroke="#8a8a8a" />
                <path d="M47.500 2.500l5.500 6V15a1 1 0 01-1 1h-9a1 1 0 01-1-1V8.500z" fill="white" stroke="#b0b0b0" />
              </svg>
            </Field>
          </div>
        </Section>

        <Section title="Shadow">
          <div className="h-[27px] pt-1">
            <Field label="Type" id="shadow-type">
              <Dropdown id="shadow-type" options={["No Shadow"]} />
            </Field>
          </div>
        </Section>

        <Section title="Make Same Attributes">
          <div className="flex items-start gap-2 pt-1 pl-2">
            {attributeButtons.map((a) => (
              <button key={a.label} type="button" className="flex w-10 flex-col items-center">
                {a.glyph ? (
                  <span className="font-[Liberation_Serif,serif] text-[24px] leading-[18px] text-[#2084b0]" aria-hidden="true">A</span>
                ) : (
                  <Icon>{a.icon}</Icon>
                )}
                <span className="pt-[2px] text-[9px] leading-[11px] text-[#222]">{a.label}</span>
              </button>
            ))}
          </div>
        </Section>
      </div>
    </aside>
  );
}

function StatusBar() {
  return (
    <footer className="flex h-5 shrink-0 items-center bg-[#ebebeb] pb-px pl-[13px] text-[11px] whitespace-pre text-black">
      <span className="w-[207px]">Ready</span>
      <span className="w-[327px]">W: 2.05,  H: 0.80,  Angle: 0.00°</span>
      <span className="w-[255px]">M: [ 7.04, 8.29 ]</span>
      <span>ID: 67408</span>
    </footer>
  );
}

export default function App() {
  return (
    <div className="flex h-screen flex-col overflow-hidden bg-[#eeeeee] font-[Inter,sans-serif]">
      <Header />
      <Toolbar />
      <main className="flex min-h-0 flex-1">
        <PagesSidebar />
        <div className="ml-[2px] flex min-w-0 flex-1 flex-col border-l-2 border-[#8c8c8c]">
          <div className="flex min-h-0 flex-1">
            <div className="flex min-w-0 flex-1 flex-col border-t border-black">
              <Canvas />
            </div>
            <div className="flex w-[15px] justify-center border-l border-[#e6e6e6] bg-[#fafafa] pt-[6px] pb-2">
              <div className="w-2 rounded-full bg-[#c1c1c1]" />
            </div>
          </div>
          <CanvasFooter />
        </div>
        <FormatPanel />
      </main>
      <StatusBar />
    </div>
  );
}
